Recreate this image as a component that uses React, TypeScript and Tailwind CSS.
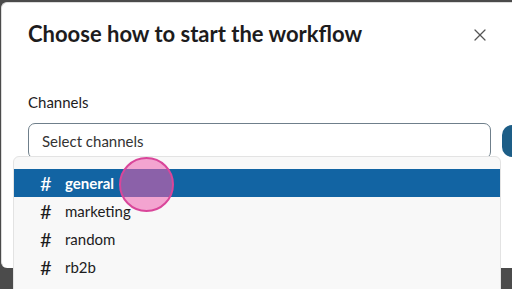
import { X } from 'lucide-react'

const CHANNELS = ['general', 'marketing', 'random', 'rb2b']

export default function App() {
  return (
    <div className="relative h-[289px] w-[512px] overflow-hidden bg-[#4b4b4b]" style={{ fontFamily: 'Lato, "Noto Sans", sans-serif' }}>
      {/* модальное окно */}
      <div className="ml-[1px] mt-[2px] h-[266px] w-[530px] rounded-l-[6px] border-l border-t border-[#dcdcdc] bg-white">
        <div className="flex w-[512px] items-center justify-between pl-[26px] pr-[24px] pt-[17px]">
          <h1 className="text-[22px] font-bold leading-[28px] text-[#1d1c1d]">Choose how to start the workflow</h1>
          <X className="mt-[2px] h-[20px] w-[20px] text-[#555]" strokeWidth={1.5} />
        </div>
        <div className="pl-[26px] pt-[44px]">
          <div className="text-[15px] leading-[20px] text-[#1d1c1d]">Channels</div>
          <div className="mt-[11px] flex items-center gap-[11px]">
            <div className="flex h-[36px] w-[463px] items-center rounded-[7px] border border-[#6f7f8b] px-[13px] text-[15px] text-[#333]">
              Select channels
            </div>
            <div className="h-[32px] w-[20px] rounded-l-[10px] bg-[#1d5e87]" />
          </div>
        </div>
      </div>

      {/* выпадающий список */}
      <div className="absolute left-[13px] top-[156px] h-[140px] w-[488px] rounded-[6px] border border-[#e3e3e3] bg-[#f8f8f8] pt-[12px]">
        {CHANNELS.map((c, i) => (
          <div
            key={c}
            className={`flex h-[28px] items-center gap-[10px] pl-[26px] text-[15px] ${i === 0 ? 'bg-[#1264a3] font-bold text-white' : 'text-[#1d1c1d]'}`}
          >
            <span className="w-[15px] text-[20px] font-normal leading-none">#</span>
            <span>{c}</span>
          </div>
        ))}
      </div>

      {/* курсор-кружок */}
      <div className="absolute left-[119px] top-[157px] h-[55px] w-[55px] rounded-full border-[2px] border-[#d9469a] bg-[#ee5fae]/55" />
    </div>
  )
}
